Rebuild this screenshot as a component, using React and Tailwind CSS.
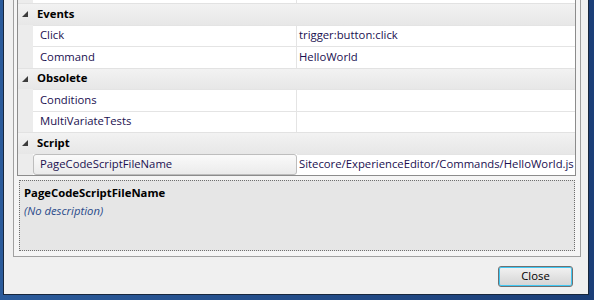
// App.jsx - property grid dialog
const font = { fontFamily: '"Open Sans", "Noto Sans", sans-serif' };

function Triangle() {
  return (
    <svg width="6" height="6" viewBox="0 0 6 6" className="block">
      <polygon points="6,0 6,6 0,6" fill="#3c3c3c" />
    </svg>
  );
}

function Category({ label }) {
  return (
    <div className="h-[21.5px] flex items-center border-t border-[#e2e2e2] bg-gradient-to-b from-[#f2f2f2] to-[#e7e7e7]">
      <div className="w-[15px] pl-[4px] flex items-center">
        <Triangle />
      </div>
      <span className="pl-[4px] font-bold text-black">{label}</span>
    </div>
  );
}

function Prop({ name, value, selected }) {
  return (
    <div className="h-[21.5px] flex">
      <div className="w-[15px] bg-[#ececec]" />
      {selected ? (
        <div className="w-[264px] flex items-center pl-[6px] border border-[#bdbdbd] rounded-[3px] bg-gradient-to-b from-[#fafafa] to-[#ebebeb] text-[#1a1050]">
          {name}
        </div>
      ) : (
        <div className="w-[264px] flex items-center pl-[7px] border-t border-r border-[#e4e4e4] text-[#1a1050]">
          {name}
        </div>
      )}
      <div className="flex-1 flex items-center pl-[2px] border-t border-[#e4e4e4] text-[#1a1050] whitespace-nowrap overflow-hidden">
        {value}
      </div>
    </div>
  );
}

export default function App() {
  return (
    <div
      className="w-[594px] h-[300px] bg-gradient-to-r from-[#2b5b9b] to-[#1b3e77] pl-[3px] pr-[5px] pb-[5px] overflow-hidden text-[11.3px]"
      style={font}
    >
      <div className="h-full border-x border-b border-[#17263c] bg-[#f0f0f0] flex flex-col">
        {/* group box */}
        <div className="ml-[9px] mr-[7px] h-[257px] border-x border-b border-[#a0a0a0] bg-[#f5f5f5] pl-[3px] pr-[4px] flex flex-col">
          {/* property grid */}
          <div className="h-[176px] border-x border-b border-[#8c8c8c] bg-white flex flex-col overflow-hidden">
            <div className="h-[3px] flex">
              <div className="w-[15px] bg-[#ececec]" />
              <div className="w-[264px] border-r border-[#e4e4e4]" />
            </div>
            <Category label="Events" />
            <Prop name="Click" value="trigger:button:click" />
            <Prop name="Command" value="HelloWorld" />
            <Category label="Obsolete" />
            <Prop name="Conditions" value="" />
            <Prop name="MultiVariateTests" value="" />
            <Category label="Script" />
            <Prop
              name="PageCodeScriptFileName"
              value="Sitecore/ExperienceEditor/Commands/HelloWorld.js"
              selected
            />
          </div>

          {/* description */}
          <div className="mt-[4px] ml-[2px] mr-[1px] h-[71px] border border-dotted border-[#6e6e6e] bg-[#e6e6e6] px-[4px] pt-[3px] leading-[18px]">
            <div className="font-bold text-black">PageCodeScriptFileName</div>
            <div className="italic text-[#2a4a8a]">(No description)</div>
          </div>
        </div>

        {/* buttons */}
        <div className="flex justify-end mt-[9px] mr-[15px]">
          <button className="w-[75px] h-[21px] rounded-[3px] border border-[#707070] bg-gradient-to-b from-[#f2f2f2] to-[#d4d4d4] shadow-[inset_0_0_0_1px_#40c8f4] text-black flex items-center justify-center">
            Close
          </button>
        </div>
      </div>
    </div>
  );
}
